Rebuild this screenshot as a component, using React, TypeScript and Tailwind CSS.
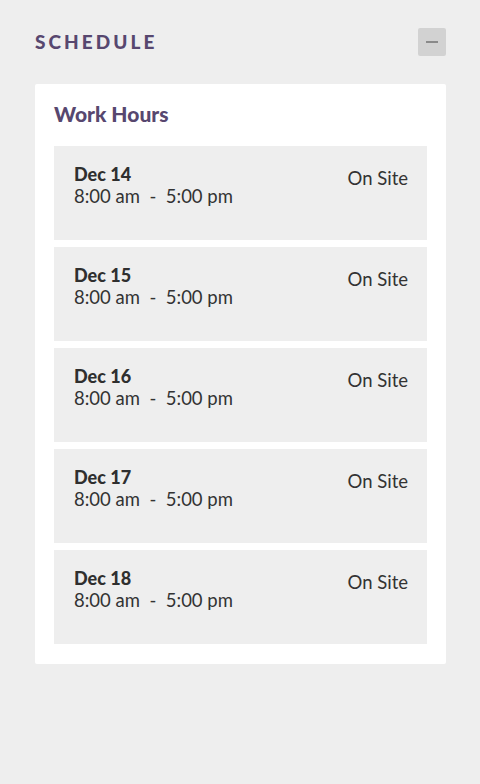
import React from 'react';

const days = ['Dec 14', 'Dec 15', 'Dec 16', 'Dec 17', 'Dec 18'];

const App: React.FC = () => {
  return (
    <div
      className="min-h-[784px] w-[480px] bg-[#eeeeee] px-[34px] pt-[28px] text-[#333333]"
      style={{ fontFamily: 'Lato, "Open Sans", sans-serif' }}
    >
      <div className="flex items-center justify-between">
        <h1 className="pl-[1px] text-[19px] font-black tracking-[0.16em] text-[#57476f]">SCHEDULE</h1>
        <button className="flex h-[28px] w-[28px] items-center justify-center rounded-[2px] bg-[#d2d2d2]">
          <span className="block h-[2px] w-[12px] bg-[#8a8a8a]" />
        </button>
      </div>

      <div className="ml-[1px] mt-[27px] w-[411px] rounded-[2px] bg-white px-[19px] pb-[20px] pt-[16px]">
        <h2 className="text-[21px] font-black leading-[28px] text-[#57476f]">Work Hours</h2>
        <div className="mt-[18px] flex flex-col gap-[7px]">
          {days.map(day => (
            <div key={day} className="flex h-[94px] justify-between bg-[#eeeeee] pl-[20px] pr-[19px] pt-[17px]">
              <div className="flex flex-col">
                <span className="text-[18px] font-black leading-[22px] text-[#2f2f2f]">{day}</span>
                <span className="text-[18.5px] leading-[22px]">8:00 am&nbsp; -&nbsp; 5:00 pm</span>
              </div>
              <span className="pt-[4px] text-[18.5px] leading-[22px]">On Site</span>
            </div>
          ))}
        </div>
      </div>
    </div>
  );
};

export default App;
